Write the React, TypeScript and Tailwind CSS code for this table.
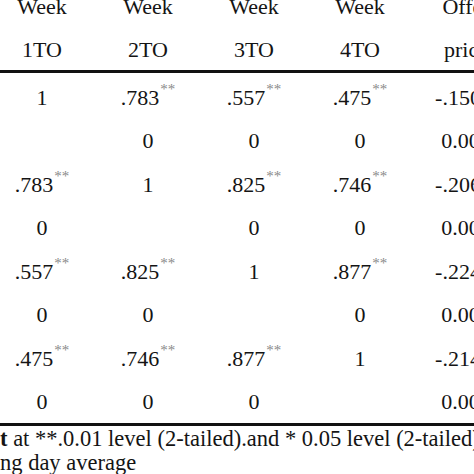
import React from "react";

type Cell = { v: string; sig?: boolean };

const c = (v: string, sig = false): Cell => ({ v, sig });

// correlation matrix rows, value / p-value pairs
const rows: Cell[][] = [
  [c("1"), c(".783", true), c(".557", true), c(".475", true), c("-.150", true)],
  [c(""), c("0"), c("0"), c("0"), c("0.000")],
  [c(".783", true), c("1"), c(".825", true), c(".746", true), c("-.206", true)],
  [c("0"), c(""), c("0"), c("0"), c("0.000")],
  [c(".557", true), c(".825", true), c("1"), c(".877", true), c("-.224", true)],
  [c("0"), c("0"), c(""), c("0"), c("0.000")],
  [c(".475", true), c(".746", true), c(".877", true), c("1"), c("-.214", true)],
  [c("0"), c("0"), c("0"), c(""), c("0.000")],
];

const top = ["Week", "Week", "Week", "Week", "Offer"];
const bottom = ["1TO", "2TO", "3TO", "4TO", "price"];

const App: React.FC = () => {
  return (
    <div className="w-[474px] h-[474px] overflow-hidden bg-white text-[#141414] font-['Liberation_Serif','Times_New_Roman',serif]">
      <div className="-mt-[15px] w-[474px]">
        {/* Header */}
        <div className="-ml-[11px] grid grid-cols-[repeat(5,106px)] h-[44px] items-center text-[22px] leading-none">
          {top.map((t, i) => (
            <div key={i} className="text-center">
              {t}
            </div>
          ))}
        </div>
        <div className="-ml-[11px] grid grid-cols-[repeat(5,106px)] h-[41px] items-center text-[22px] leading-none">
          {bottom.map((t, i) => (
            <div key={i} className="text-center">
              {t}
            </div>
          ))}
        </div>
        <div className="border-t-[3px] border-[#111]" />

        {/* Body */}
        <div className="pt-[3px]">
          {rows.map((r, ri) => (
            <div
              key={ri}
              className={`-ml-[11px] grid grid-cols-[repeat(5,106px)] items-center text-[22px] leading-none ${
                ri === rows.length - 1 ? "h-[42px]" : "h-[43.5px]"
              }`}
            >
              {r.map((cell, ci) => (
                <div key={ci} className="text-center whitespace-nowrap">
                  {cell.v}
                  {cell.sig && (
                    <sup className="text-[15px] text-[#8a8a8a] align-top relative top-[2px] ml-[1px]">
                      **
                    </sup>
                  )}
                </div>
              ))}
            </div>
          ))}
        </div>
        <div className="border-t-[3px] border-[#111]" />

        {/* Footnote */}
        <div className="text-[22.5px] leading-[24px] whitespace-nowrap pt-[1px]">
          <p>
            <span className="font-bold">t</span> at **.0.01 level (2-tailed).and * 0.05 level (2-tailed)
          </p>
          <p>ng day average</p>
        </div>
      </div>
    </div>
  );
};

export default App;
